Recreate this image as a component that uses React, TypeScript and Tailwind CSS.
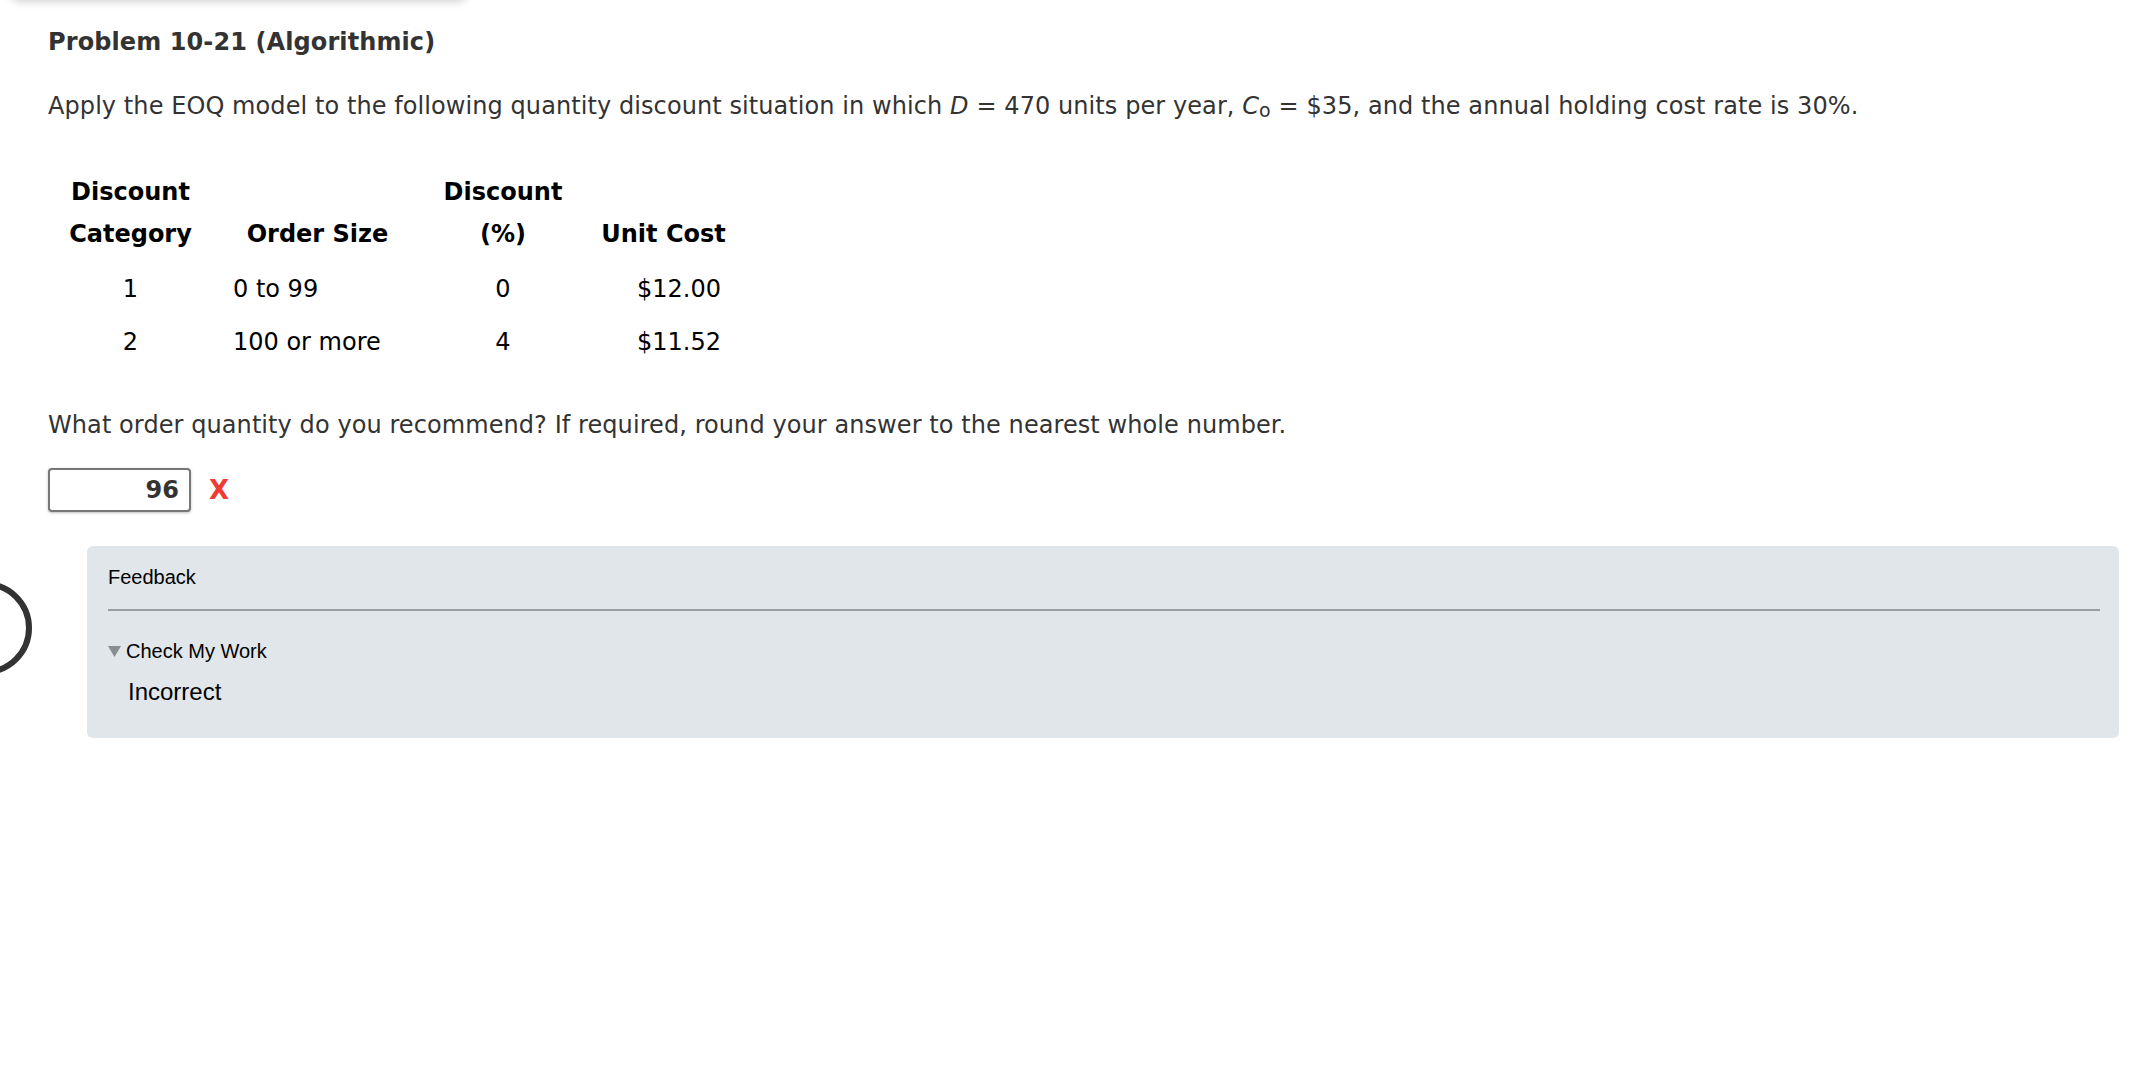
export default function App() {
  const rows = [
    { cat: "1", size: "0 to 99", disc: "0", cost: "$12.00" },
    { cat: "2", size: "100 or more", disc: "4", cost: "$11.52" },
  ];

  return (
    <div className="relative min-h-screen overflow-hidden bg-white font-['DejaVu_Sans',Verdana,sans-serif] text-[24px] text-[#333]">
      {/* edge of the card above, mostly scrolled away */}
      <div className="absolute -top-[40px] left-[10px] h-[40px] w-[458px] rounded-b-[10px] bg-white shadow-[0_2px_8px_rgba(0,0,0,0.18)]" />

      {/* floating round control at the left edge */}
      <div className="absolute left-[-62px] top-[581px] h-[94px] w-[94px] rounded-full border-[6px] border-[#333]" />

      <div className="pl-[48px] pt-[26px]">
        <h1 className="text-[24px] font-bold leading-[32px] tracking-[0.1px] text-[#333]">Problem 10-21 (Algorithmic)</h1>

        <p className="mt-[32px] leading-[32px] tracking-[0.08px]">
          Apply the EOQ model to the following quantity discount situation in which <i>D</i> = 470 units per year,{" "}
          <i>C</i>
          <span className="relative top-[3px] text-[19px]">o</span> = $35, and the annual holding cost rate is 30%.
        </p>

        <div className="ml-[14px] mt-[48px] grid w-max grid-cols-[137px_237px_134px_189px] text-black">
          <div className="flex h-[42px] items-center justify-center font-bold">Discount</div>
          <div className="h-[42px]" />
          <div className="flex h-[42px] items-center justify-center font-bold">Discount</div>
          <div className="h-[42px]" />

          <div className="flex h-[42px] items-center justify-center font-bold">Category</div>
          <div className="flex h-[42px] items-center justify-center font-bold">Order Size</div>
          <div className="flex h-[42px] items-center justify-center font-bold">(%)</div>
          <div className="flex h-[42px] items-center justify-center pr-[2px] font-bold">Unit Cost</div>

          <div className="col-span-4 h-[7px]" />

          {rows.map((r) => (
            <div key={r.cat} className="contents">
              <div className="flex h-[53px] items-center justify-center">{r.cat}</div>
              <div className="flex h-[53px] items-center pl-[34px]">{r.size}</div>
              <div className="flex h-[53px] items-center justify-center">{r.disc}</div>
              <div className="flex h-[53px] items-center justify-end pr-[38px]">{r.cost}</div>
            </div>
          ))}
        </div>

        <p className="mt-[41px] leading-[32px] tracking-[0.08px]">
          What order quantity do you recommend? If required, round your answer to the nearest whole number.
        </p>

        <div className="mt-[27px] flex items-center gap-[18px]">
          <div className="flex h-[44px] w-[143px] items-center justify-end rounded-[4px] border-2 border-[#777] bg-white pr-[10px] font-bold text-[#333] shadow-[0_1px_3px_rgba(0,0,0,0.25)]">
            96
          </div>
          <span className="text-[26px] font-bold leading-none text-[#ee3b33]">X</span>
        </div>

        <div className="ml-[39px] mr-[11px] mt-[34px] h-[192px] rounded-[6px] bg-[#e1e6ea] pl-[21px] pr-[19px] pt-[18px] font-['Liberation_Sans',Arial,sans-serif] text-black">
          <div className="text-[20px] leading-[26px]">Feedback</div>
          <div className="mt-[19px] h-[2px] bg-[#989ea2]" />
          <div className="mt-[28px] flex items-center text-[20px] leading-[24px]">
            <svg width="13" height="12" viewBox="0 0 13 12" className="mr-[5px]">
              <polygon points="0,1 13,1 6.5,12" fill="#8a8d90" />
            </svg>
            <span>Check My Work</span>
          </div>
          <div className="ml-[20px] mt-[14px] text-[24px] leading-[30px]">Incorrect</div>
        </div>
      </div>
    </div>
  );
}
